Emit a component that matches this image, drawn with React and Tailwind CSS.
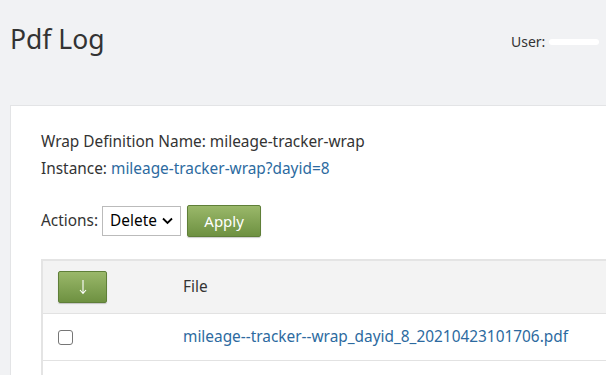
export default function App() {
  const font = { fontFamily: '"Noto Sans", "Open Sans", Arial, sans-serif' };
  return (
    <div className="w-[606px] h-[375px] overflow-hidden bg-[#f1f2f4] text-[#333]" style={font}>
      <div className="flex items-start justify-between h-[105px] pl-[10px]">
        <h1 className="text-[26.5px] leading-none mt-[26px] font-normal text-[#333]">Pdf Log</h1>
        <div className="mt-[31px] text-[14px] flex items-center w-[95px]">
          <span>User:</span>
          <span className="ml-1 inline-block w-[50px] h-[6px] bg-white rounded-full"></span>
        </div>
      </div>
      <div className="ml-[10px] w-[640px] bg-white border-l border-t border-[#e3e4e6] pl-[30px] pt-[22px] text-[15.4px]">
        <div className="leading-[27px]">
          <div>Wrap Definition Name: mileage-tracker-wrap</div>
          <div>Instance: <a className="text-[#2c6aa0]">mileage-tracker-wrap?dayid=8</a></div>
        </div>
        <div className="flex items-center mt-[23px]">
          <span>Actions:</span>
          <div className="ml-[4px] h-[30px] w-[79px] border border-[#bbb] flex items-center justify-between px-[7px] text-[#000]">
            <span>Delete</span>
            <svg width="11" height="8" viewBox="0 0 11 8"><path d="M1 1.5 L5.5 6 L10 1.5" stroke="#000" strokeWidth="1.8" fill="none" /></svg>
          </div>
          <button className="ml-[6px] h-[32px] w-[74px] rounded-[2px] border border-[#5f7f38] bg-gradient-to-b from-[#9ab86a] to-[#6e9141] text-white text-[15px] shadow-[0_1px_1px_rgba(0,0,0,0.2)]">Apply</button>
        </div>
        <div className="mt-[22px] border-t-2 border-l-2 border-[#e4e4e4]">
          <div className="flex items-center h-[53px] bg-[#f3f3f3] border-b border-[#e2e2e2]">
            <div className="w-[140px] pl-[15px]">
              <button className="h-[32px] w-[49px] rounded-[2px] border border-[#5f7f38] bg-gradient-to-b from-[#9ab86a] to-[#6e9141] shadow-[0_1px_1px_rgba(0,0,0,0.2)] flex items-center justify-center">
                <svg width="8" height="16" viewBox="0 0 8 16"><path d="M4 1 V14.5 M1 11 L4 14.5 L7 11" stroke="#fff" strokeWidth="1.1" fill="none" /></svg>
              </button>
            </div>
            <div>File</div>
          </div>
          <div className="flex items-center h-[47px] border-b border-[#e2e2e2]">
            <div className="w-[140px] pl-[15px] flex items-center">
              <span className="inline-block w-[15px] h-[15px] border border-[#767676] rounded-[3px] bg-white"></span>
            </div>
            <a className="text-[#2c6aa0]">mileage--tracker--wrap_dayid_8_20210423101706.pdf</a>
          </div>
          <div className="h-[40px]"></div>
        </div>
      </div>
    </div>
  );
}
